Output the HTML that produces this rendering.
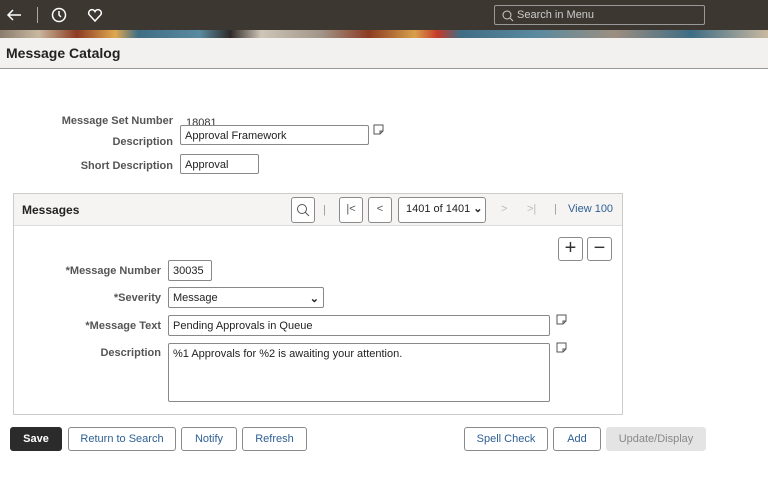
<!DOCTYPE html>
<html><head><meta charset="utf-8"><style>
body{margin:0;width:768px;height:492px;background:#fff;font-family:"Liberation Sans",Arial,sans-serif;font-size:11px;color:#333;position:relative;overflow:hidden}
.a{position:absolute}
.hdr{left:0;top:0;width:768px;height:30px;background:#3d3731}
.band{left:0;top:30px;width:768px;height:8px;background:linear-gradient(90deg,#8a7b6c 0,#c9b8a0 5%,#8c3b22 10%,#e0a850 15%,#3e6d85 18%,#5a8aa0 26%,#2e2a28 30%,#cfc6b8 34%,#a09486 42%,#8c3b22 48%,#d8a04a 54%,#c43a2a 57%,#3e6d85 60%,#5a8aa0 70%,#9c8e80 80%,#3e6d85 90%,#c9b8a0 100%)}
.title{left:0;top:38px;width:768px;height:30px;background:#f2f1f0;border-bottom:1px solid #999}
.title span{position:absolute;left:6px;top:7px;font-size:14px;font-weight:bold;color:#222}
.lbl{text-align:right;color:#555;font-weight:bold}
.inp{border:1px solid #888;background:#fff;height:20px;box-sizing:border-box;padding:4px 4px 2px;font-size:11px;border-radius:2px;color:#222}
.btn{border:1px solid #8a8a8a;border-radius:3px;height:24px;box-sizing:border-box;text-align:center;line-height:22px;color:#2e6095;background:#fff}
</style></head><body>
<div class="a hdr">
<svg class="a" style="left:5px;top:7px" width="18" height="16"><path d="M16 8H3M8 3L3 8l5 5" stroke="#fff" stroke-width="1.5" fill="none"/></svg>
<div class="a" style="left:37px;top:7px;width:1px;height:16px;background:#aaa"></div>
<svg class="a" style="left:51px;top:7px" width="16" height="16"><circle cx="8" cy="8" r="6.5" stroke="#fff" stroke-width="1.5" fill="none"/><path d="M8 4v4l2 2" stroke="#fff" stroke-width="1.5" fill="none"/></svg>
<svg class="a" style="left:87px;top:7px" width="16" height="16"><path d="M8 14L2 7.5a3.2 3.2 0 0 1 6-3 3.2 3.2 0 0 1 6 3z" stroke="#fff" stroke-width="1.5" fill="none"/></svg>
<div class="a" style="left:494px;top:5px;width:211px;height:20px;border:1px solid #999;border-radius:2px;box-sizing:border-box"></div>
<svg class="a" style="left:502px;top:10px" width="12" height="12"><circle cx="5" cy="5" r="4" stroke="#ccc" fill="none"/><path d="M8 8l3 3" stroke="#ccc"/></svg>
<div class="a" style="left:517px;top:9px;color:#ccc;font-size:11px">Search in Menu</div>
</div>
<div class="a band"></div>
<div class="a title"><span>Message Catalog</span></div>

<div class="a lbl" style="left:30px;top:115px;width:143px">Message Set Number</div>
<div class="a" style="left:186px;top:117px">18081</div>
<div class="a lbl" style="left:30px;top:136px;width:143px">Description</div>
<div class="a inp" style="left:180px;top:125px;width:189px">Approval Framework</div>
<svg class="a" style="left:373px;top:124px" width="12" height="12"><path d="M1 1h9v6l-3 3H1z M7 10V7h3" stroke="#555" fill="none"/></svg>
<div class="a lbl" style="left:30px;top:160px;width:143px">Short Description</div>
<div class="a inp" style="left:180px;top:154px;width:79px">Approval</div>

<div class="a" style="left:13px;top:193px;width:610px;height:222px;border:1px solid #ccc;box-sizing:border-box"></div>
<div class="a" style="left:14px;top:194px;width:608px;height:31px;background:#f5f4f3;border-bottom:1px solid #ddd"></div>
<div class="a" style="left:22px;top:203px;font-size:12px;font-weight:bold;color:#222">Messages</div>
<div class="a btn" style="left:291px;top:197px;width:24px;height:26px"><svg width="14" height="14" style="margin-top:5px"><circle cx="6" cy="6" r="4.5" stroke="#555" fill="none"/><path d="M9 9l4 4" stroke="#555"/></svg></div>
<div class="a" style="left:323px;top:204px;color:#999">|</div>
<div class="a btn" style="left:339px;top:197px;width:24px;height:26px;color:#555">|&lt;</div>
<div class="a btn" style="left:368px;top:197px;width:24px;height:26px;color:#555">&lt;</div>
<div class="a btn" style="left:398px;top:197px;width:88px;height:26px;color:#222;text-align:left;padding-left:7px">1401 of 1401 <b>⌄</b></div>
<div class="a" style="left:501px;top:203px;color:#bbb">&gt;</div>
<div class="a" style="left:527px;top:203px;color:#bbb">&gt;|</div>
<div class="a" style="left:554px;top:203px;color:#999">|</div>
<div class="a" style="left:568px;top:203px;color:#2e6095">View 100</div>
<div class="a btn" style="left:558px;top:237px;width:25px;color:#333;font-size:20px;line-height:21px">+</div>
<div class="a btn" style="left:587px;top:237px;width:25px;color:#333;font-size:20px;line-height:21px">−</div>

<div class="a lbl" style="left:20px;top:265px;width:141px">*Message Number</div>
<div class="a inp" style="left:168px;top:260px;width:44px;height:21px">30035</div>
<div class="a lbl" style="left:20px;top:292px;width:141px">*Severity</div>
<div class="a inp" style="left:168px;top:287px;width:156px;height:21px">Message<span style="float:right;font-weight:bold">⌄</span></div>
<div class="a lbl" style="left:20px;top:320px;width:141px">*Message Text</div>
<div class="a inp" style="left:168px;top:315px;width:382px;height:21px">Pending Approvals in Queue</div>
<svg class="a" style="left:556px;top:314px" width="12" height="12"><path d="M1 1h9v6l-3 3H1z M7 10V7h3" stroke="#555" fill="none"/></svg>
<div class="a lbl" style="left:20px;top:347px;width:141px">Description</div>
<div class="a inp" style="left:168px;top:343px;width:382px;height:59px">%1 Approvals for %2 is awaiting your attention.</div>
<svg class="a" style="left:556px;top:342px" width="12" height="12"><path d="M1 1h9v6l-3 3H1z M7 10V7h3" stroke="#555" fill="none"/></svg>

<div class="a btn" style="left:10px;top:427px;width:52px;background:#2b2b2b;border-color:#2b2b2b;color:#fff;font-weight:bold">Save</div>
<div class="a btn" style="left:68px;top:427px;width:108px">Return to Search</div>
<div class="a btn" style="left:181px;top:427px;width:56px">Notify</div>
<div class="a btn" style="left:242px;top:427px;width:65px">Refresh</div>
<div class="a btn" style="left:464px;top:427px;width:84px">Spell Check</div>
<div class="a btn" style="left:553px;top:427px;width:48px">Add</div>
<div class="a btn" style="left:606px;top:427px;width:100px;background:#e4e4e4;border-color:#e4e4e4;color:#888">Update/Display</div>
</body></html>
